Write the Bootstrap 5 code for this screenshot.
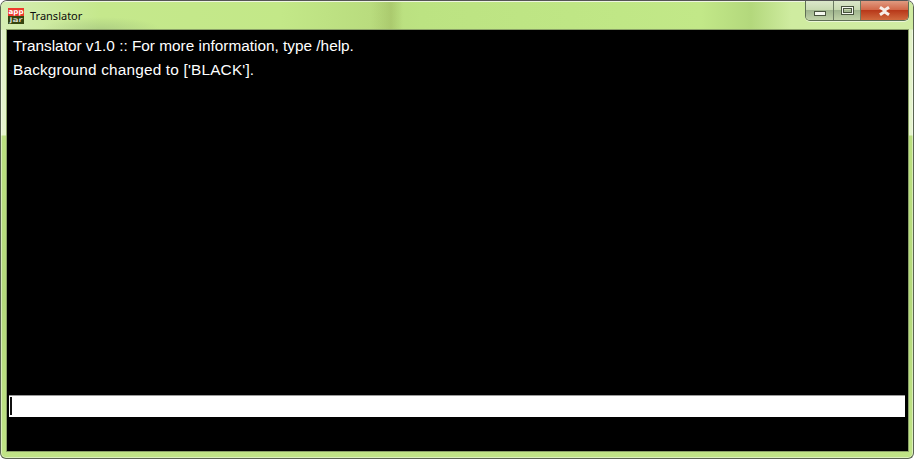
<!DOCTYPE html>
<html lang="en">
<head>
<meta charset="utf-8">
<title>Translator</title>
<link href="https://cdn.jsdelivr.net/npm/bootstrap@5.3.0/dist/css/bootstrap.min.css" rel="stylesheet">
<style>
html,body{height:100%;margin:0;background:#fff;overflow:hidden}
.app-frame{height:459px;width:914px;border:1px solid #5a6452;border-top-color:#555;border-radius:7px 7px 6px 6px;
 background:linear-gradient(180deg,#e0f1c4 0,#e6f5ce 134px,#bbe080 135px,#b4d97c 300px,#c0e486 100%);
 box-shadow:inset 0 0 0 1px rgba(255,255,255,.45);padding:0 5px 7px 6px;overflow:hidden}
.app-title{height:29px;margin:0 -5px 0 -6px;padding:0 4px 0 7px;gap:5px;
 font-family:"Noto Sans","Open Sans",sans-serif;font-size:11px;color:#0c0c0c;
 border-top:1px solid #eef5e2;border-bottom:1px solid #d9eeb8;
 background:
  radial-gradient(60px 12px at 100px 27px,rgba(120,150,110,.28),transparent),
  linear-gradient(90deg,rgba(0,0,0,0) 370px,rgba(110,120,40,.2) 390px,rgba(0,0,0,0) 402px),
  linear-gradient(90deg,#d6eeb4 0,#c5e88c 100px,#c3e888 280px,#b9dc7e 370px,#bce382 420px,#c0e786 620px,#c2e888 700px,#b3d87c 750px,#cfeca0 790px,#d0eca2 100%)}
.app-ico{width:16px;height:16px;flex:none;margin-top:6px}
.app-name{flex:1 1 auto;margin-top:6px;margin-left:1px;line-height:16px}
.win-ctl{align-self:flex-start;height:20px;margin-top:-1px;border:1px solid #5f6f55;border-top:0;border-radius:0 0 5px 5px;overflow:hidden;box-shadow:0 1px 0 rgba(255,255,255,.6)}
.win-btn{height:100%;display:flex;align-items:center;justify-content:center;border-right:1px solid #6b7a62;background:linear-gradient(#dbe7ca 0,#c9dab2 45%,#9fb48e 50%,#c0d2a8 100%)}
.win-btn.b-min{width:28px}
.win-btn.b-min svg{margin-top:5px}
.win-btn.b-max{width:27px}
.win-btn.b-close{width:47px;border-right:0;background:linear-gradient(#e09a80 0,#d2694a 45%,#b8391a 50%,#d06a3e 100%)}
.console-pane{flex:1 1 auto;background:#000;color:#fff;font-family:"Liberation Sans",Arial,sans-serif;font-size:15.37px;line-height:24px;box-shadow:0 0 0 1px #8ba168;min-height:0}
.console-log{padding:4px 0 0 6px;flex:1 1 auto}
.log-wide{letter-spacing:.18px}
.console-input{display:block;width:896px;height:22px;margin:0 0 34px 2px;background:#fff;border-top:1px solid #9a9a9a}
.caret-bar{display:block;width:2px;height:18px;margin:1px 0 0 1px;background:#111}
</style>
</head>
<body>
<div class="app-frame d-flex flex-column">
  <div class="app-title d-flex align-items-start">
    <svg class="app-ico" viewBox="0 0 16 16" role="img" aria-label="App Jar">
      <rect width="16" height="8" fill="#ee3a2c"/>
      <rect y="8" width="16" height="8" fill="#35450f"/>
      <text x="8" y="5.6" text-anchor="middle" font-family="DejaVu Sans,sans-serif" font-weight="bold" font-size="7" textLength="15" lengthAdjust="spacingAndGlyphs" fill="#fff">app</text>
      <text x="8" y="14.4" text-anchor="middle" font-family="DejaVu Sans,sans-serif" font-size="6.5" textLength="13" lengthAdjust="spacingAndGlyphs" fill="#fff">Jar</text>
    </svg>
    <span class="app-name">Translator</span>
    <div class="win-ctl d-flex">
      <div class="win-btn b-min"><svg width="12" height="5" viewBox="0 0 12 5"><rect x=".5" y=".5" width="11" height="4" fill="#f4f7ef" stroke="#47523d"/></svg></div>
      <div class="win-btn b-max"><svg width="13" height="9" viewBox="0 0 13 9"><rect x="1" y="1" width="11" height="7" fill="none" stroke="#f4f7ef" stroke-width="2"/><rect x=".5" y=".5" width="12" height="8" fill="none" stroke="#47523d"/><rect x="2.5" y="2.5" width="8" height="4" fill="none" stroke="#47523d"/></svg></div>
      <div class="win-btn b-close"><svg width="13" height="10" viewBox="0 0 13 10"><path d="M2 1.2l4.5 3L11 1.2M2 8.8l4.5-3L11 8.8" fill="none" stroke="#f6eee8" stroke-width="3"/></svg></div>
    </div>
  </div>
  <div class="console-pane d-flex flex-column">
    <div class="console-log">
      <div>Translator v1.0 :: For more information, type /help.</div>
      <div class="log-wide">Background changed to ['BLACK'].</div>
    </div>
    <div class="console-input"><span class="caret-bar"></span></div>
  </div>
</div>
<script src="https://cdn.jsdelivr.net/npm/bootstrap@5.3.0/dist/js/bootstrap.bundle.min.js"></script>
</body>
</html>
